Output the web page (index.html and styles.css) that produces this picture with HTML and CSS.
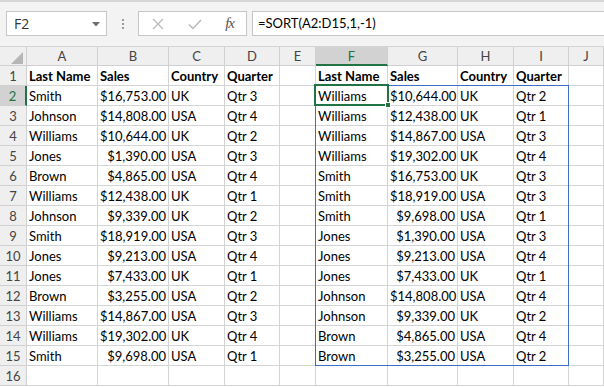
FILE: index.html
```html
<!DOCTYPE html>
<html>
<head>
<meta charset="utf-8">
<link rel="stylesheet" href="styles.css">
</head>
<body>
<div class="toolbar">
  <div class="namebox"><span class="nb-text">F2</span>
    <svg class="nb-arrow" width="8" height="5" viewBox="0 0 8 5"><path d="M0 0H8L4 4.5Z" fill="#6e6e6e"/></svg>
  </div>
  <div class="dots"><span></span><span></span><span></span></div>
  <div class="fbuttons">
    <svg width="12" height="12" viewBox="0 0 12 12"><path d="M1 1L11 11M11 1L1 11" stroke="#b9b9b9" stroke-width="1.3" fill="none"/></svg>
    <svg width="14" height="12" viewBox="0 0 14 12"><path d="M1 6.5L5 10.5L13 2" stroke="#b9b9b9" stroke-width="1.5" fill="none"/></svg>
    <span class="fx">fx</span>
  </div>
  <div class="formula">=SORT(A2:D15,1,-1)</div>
</div>
<div class="sheet">
  <div class="row hdr">
    <div class="c corner"><svg width="12" height="12" viewBox="0 0 12 12"><path d="M12 0V12H0Z" fill="#b6b6b6"/></svg></div>
    <div class="c">A</div><div class="c">B</div><div class="c">C</div><div class="c">D</div><div class="c">E</div>
    <div class="c sel">F</div><div class="c">G</div><div class="c">H</div><div class="c">I</div><div class="c">J</div>
  </div>
  <div class="row bold">
    <div class="c rh">1</div>
    <div class="c">Last Name</div><div class="c">Sales</div><div class="c">Country</div><div class="c">Quarter</div><div class="c"></div>
    <div class="c">Last Name</div><div class="c">Sales</div><div class="c">Country</div><div class="c">Quarter</div><div class="c"></div>
  </div>
  <div class="row">
    <div class="c rh rsel">2</div>
    <div class="c">Smith</div><div class="c r">$16,753.00</div><div class="c">UK</div><div class="c">Qtr 3</div><div class="c"></div>
    <div class="c">Williams</div><div class="c r">$10,644.00</div><div class="c">UK</div><div class="c">Qtr 2</div><div class="c"></div>
  </div>
  <div class="row">
    <div class="c rh">3</div>
    <div class="c">Johnson</div><div class="c r">$14,808.00</div><div class="c">USA</div><div class="c">Qtr 4</div><div class="c"></div>
    <div class="c">Williams</div><div class="c r">$12,438.00</div><div class="c">UK</div><div class="c">Qtr 1</div><div class="c"></div>
  </div>
  <div class="row">
    <div class="c rh">4</div>
    <div class="c">Williams</div><div class="c r">$10,644.00</div><div class="c">UK</div><div class="c">Qtr 2</div><div class="c"></div>
    <div class="c">Williams</div><div class="c r">$14,867.00</div><div class="c">USA</div><div class="c">Qtr 3</div><div class="c"></div>
  </div>
  <div class="row">
    <div class="c rh">5</div>
    <div class="c">Jones</div><div class="c r">$1,390.00</div><div class="c">USA</div><div class="c">Qtr 3</div><div class="c"></div>
    <div class="c">Williams</div><div class="c r">$19,302.00</div><div class="c">UK</div><div class="c">Qtr 4</div><div class="c"></div>
  </div>
  <div class="row">
    <div class="c rh">6</div>
    <div class="c">Brown</div><div class="c r">$4,865.00</div><div class="c">USA</div><div class="c">Qtr 4</div><div class="c"></div>
    <div class="c">Smith</div><div class="c r">$16,753.00</div><div class="c">UK</div><div class="c">Qtr 3</div><div class="c"></div>
  </div>
  <div class="row">
    <div class="c rh">7</div>
    <div class="c">Williams</div><div class="c r">$12,438.00</div><div class="c">UK</div><div class="c">Qtr 1</div><div class="c"></div>
    <div class="c">Smith</div><div class="c r">$18,919.00</div><div class="c">USA</div><div class="c">Qtr 3</div><div class="c"></div>
  </div>
  <div class="row">
    <div class="c rh">8</div>
    <div class="c">Johnson</div><div class="c r">$9,339.00</div><div class="c">UK</div><div class="c">Qtr 2</div><div class="c"></div>
    <div class="c">Smith</div><div class="c r">$9,698.00</div><div class="c">USA</div><div class="c">Qtr 1</div><div class="c"></div>
  </div>
  <div class="row">
    <div class="c rh">9</div>
    <div class="c">Smith</div><div class="c r">$18,919.00</div><div class="c">USA</div><div class="c">Qtr 3</div><div class="c"></div>
    <div class="c">Jones</div><div class="c r">$1,390.00</div><div class="c">USA</div><div class="c">Qtr 3</div><div class="c"></div>
  </div>
  <div class="row">
    <div class="c rh">10</div>
    <div class="c">Jones</div><div class="c r">$9,213.00</div><div class="c">USA</div><div class="c">Qtr 4</div><div class="c"></div>
    <div class="c">Jones</div><div class="c r">$9,213.00</div><div class="c">USA</div><div class="c">Qtr 4</div><div class="c"></div>
  </div>
  <div class="row">
    <div class="c rh">11</div>
    <div class="c">Jones</div><div class="c r">$7,433.00</div><div class="c">UK</div><div class="c">Qtr 1</div><div class="c"></div>
    <div class="c">Jones</div><div class="c r">$7,433.00</div><div class="c">UK</div><div class="c">Qtr 1</div><div class="c"></div>
  </div>
  <div class="row">
    <div class="c rh">12</div>
    <div class="c">Brown</div><div class="c r">$3,255.00</div><div class="c">USA</div><div class="c">Qtr 2</div><div class="c"></div>
    <div class="c">Johnson</div><div class="c r">$14,808.00</div><div class="c">USA</div><div class="c">Qtr 4</div><div class="c"></div>
  </div>
  <div class="row">
    <div class="c rh">13</div>
    <div class="c">Williams</div><div class="c r">$14,867.00</div><div class="c">USA</div><div class="c">Qtr 3</div><div class="c"></div>
    <div class="c">Johnson</div><div class="c r">$9,339.00</div><div class="c">UK</div><div class="c">Qtr 2</div><div class="c"></div>
  </div>
  <div class="row">
    <div class="c rh">14</div>
    <div class="c">Williams</div><div class="c r">$19,302.00</div><div class="c">UK</div><div class="c">Qtr 4</div><div class="c"></div>
    <div class="c">Brown</div><div class="c r">$4,865.00</div><div class="c">USA</div><div class="c">Qtr 4</div><div class="c"></div>
  </div>
  <div class="row">
    <div class="c rh">15</div>
    <div class="c">Smith</div><div class="c r">$9,698.00</div><div class="c">USA</div><div class="c">Qtr 1</div><div class="c"></div>
    <div class="c">Brown</div><div class="c r">$3,255.00</div><div class="c">USA</div><div class="c">Qtr 2</div><div class="c"></div>
  </div>
  <div class="row">
    <div class="c rh">16</div>
    <div class="c"></div><div class="c"></div><div class="c"></div><div class="c"></div><div class="c"></div>
    <div class="c"></div><div class="c"></div><div class="c"></div><div class="c"></div><div class="c"></div>
  </div>
  <div class="spill"></div>
  <div class="active"><span class="handle"></span></div>
</div>
</body>
</html>
```
FILE: styles.css
```css
* { box-sizing: border-box; margin: 0; padding: 0; }
html, body { width: 604px; height: 387px; overflow: hidden; background: #fff; }
body { font-family: Lato, "Liberation Sans", sans-serif; font-size: 13px; color: #000; }

.toolbar {
  height: 47px;
  background: #f3f3f3;
  border-top: 2px solid #d6d6d6;
  border-bottom: 1px solid #d4d4d4;
  display: flex;
  align-items: flex-start;
  padding: 9px 0 0 6px;
}
.namebox {
  width: 101px; height: 25px;
  background: #fff; border: 1px solid #c6c6c6;
  display: flex; align-items: center; justify-content: space-between;
  padding: 0 6px 0 7px;
  font-family: "Open Sans", "Noto Sans", sans-serif; font-size: 14px; color: #333;
}
.nb-arrow { margin-top: 1px; }
.dots { display: flex; flex-direction: column; gap: 2px; margin: 8px 0 0 15px; width: 3px; }
.dots span { width: 2px; height: 2px; background: #9a9a9a; }
.fbuttons {
  width: 109px; height: 25px; margin-left: 13px;
  background: #fff; border: 1px solid #c6c6c6;
  display: flex; align-items: center; justify-content: space-between;
  padding: 0 12px 0 13px;
}
.fx { font-family: "Liberation Serif", serif; font-style: italic; font-size: 15px; color: #555; letter-spacing: -1px; }
.formula {
  flex: 1; height: 25px; margin-left: 5px;
  background: #fff; border: 1px solid #c6c6c6; border-right: none;
  padding: 3px 0 0 5px; line-height: 17px;
}

.sheet { position: relative; }
.row {
  display: grid;
  grid-template-columns: 27px 71px 71px 56px 55px 36px 72px 70px 56px 55px 1fr;
  height: 20px;
}
.c {
  border-right: 1px solid #d4d4d4;
  border-bottom: 1px solid #d4d4d4;
  padding: 2px 3px 0 2px;
  line-height: 17px;
  white-space: nowrap;
  overflow: hidden;
}
.r { text-align: right; padding-right: 2px; }
.bold .c { font-weight: 700; }
.hdr { height: 19px; }
.hdr .c { background: #efefef; color: #444; text-align: center; padding: 1px 0 0; border-color: #d0d0d0; }
.hdr .corner { display: flex; justify-content: flex-end; align-items: flex-end; padding: 0 3px 1px 0; }
.hdr .sel { background: #d2d2d2; color: #217346; border-bottom: 2px solid #217346; }
.rh { background: #efefef; color: #444; text-align: center; padding-left: 0; padding-right: 0; border-color: #d0d0d0; }
.bold .rh { font-weight: 400; }
.rsel { background: #d2d2d2; color: #217346; border-right: 2px solid #217346; }

.spill {
  position: absolute; left: 315px; top: 38px; width: 254px; height: 281px;
  border: 1px solid #3d6fc6;
  pointer-events: none;
}
.active {
  position: absolute; left: 314px; top: 37px; width: 75px; height: 22px;
  border: 2px solid #217346;
}
.handle {
  position: absolute; right: -4px; bottom: -4px; width: 6px; height: 6px;
  background: #217346; border: 1px solid #fff;
}
```
